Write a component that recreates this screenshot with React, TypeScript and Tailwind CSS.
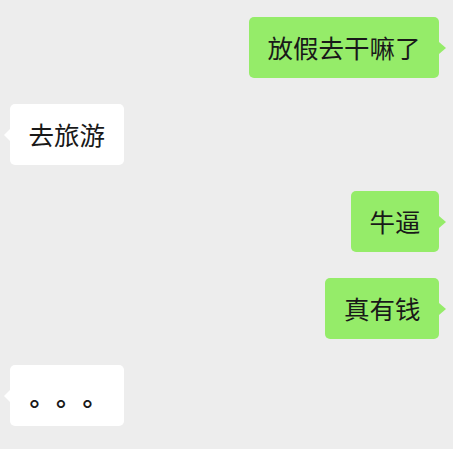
const messages = [
  { text: "放假去干嘛了", mine: true },
  { text: "去旅游", mine: false },
  { text: "牛逼", mine: true },
  { text: "真有钱", mine: true },
  { text: "。。。", mine: false, dots: true },
];

function Bubble({ text, mine, dots }: { text: string; mine: boolean; dots?: boolean }) {
  return (
    <div className={mine ? "flex justify-end pr-[14px]" : "flex justify-start pl-[10px]"}>
      <div
        className={
          "relative flex h-[61px] items-center rounded-[5px] px-[18.5px] text-[25.5px] text-[#191919] " +
          (mine ? "bg-[#95ec69]" : "bg-white") +
          (dots ? " w-[114px]" : "")
        }
      >
        {mine ? (
          <span className="absolute top-1/2 right-[-7px] -translate-y-1/2 border-y-[6px] border-l-[7px] border-y-transparent border-l-[#95ec69]" />
        ) : (
          <span className="absolute top-1/2 left-[-6px] -translate-y-1/2 border-y-[6px] border-r-[6px] border-y-transparent border-r-white" />
        )}
        {dots ? (
          <span className="flex pl-[1px] font-bold">
            {Array.from(text).map((c, i) => (
              <span key={i} className="inline-block w-[26.5px]">
                {c}
              </span>
            ))}
          </span>
        ) : (
          <span>{text}</span>
        )}
      </div>
    </div>
  );
}

export default function App() {
  return (
    <div
      className="flex h-screen w-full flex-col gap-[26px] bg-[#ededed] pt-[17px]"
      style={{ fontFamily: '"Noto Sans CJK SC", "Noto Sans", sans-serif' }}
    >
      {messages.map((m, i) => (
        <Bubble key={i} text={m.text} mine={m.mine} dots={m.dots} />
      ))}
    </div>
  );
}
